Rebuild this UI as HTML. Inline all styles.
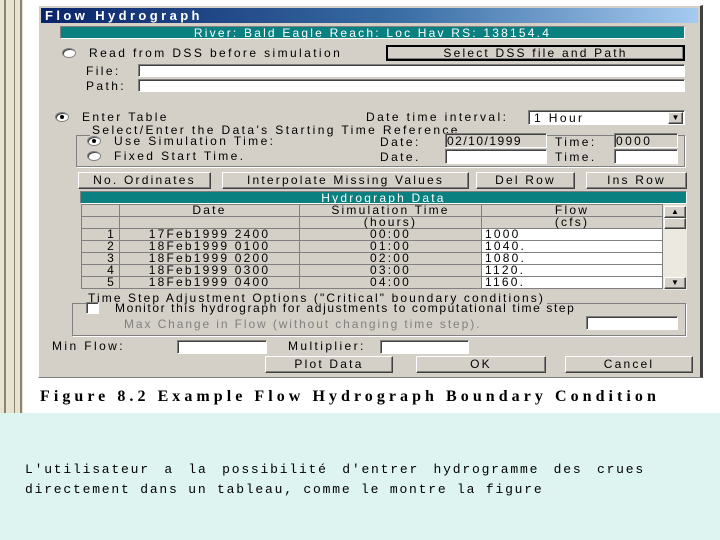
<!DOCTYPE html>
<html><head><meta charset="utf-8"><style>
*{margin:0;padding:0;box-sizing:border-box}
body{width:720px;height:540px;position:relative;overflow:hidden;background:#fff;font-family:"Liberation Sans",sans-serif}
.a{position:absolute}
.t{position:absolute;font-size:12px;letter-spacing:2.4px;color:#000;white-space:nowrap;line-height:12px}
.in{position:absolute;background:#fff;border-top:1px solid #808080;border-left:1px solid #808080;border-right:1px solid #fff;border-bottom:1px solid #fff;box-shadow:inset 1px 1px 0 #404040}
.btn{position:absolute;background:#d4d0c8;border-top:1px solid #fff;border-left:1px solid #fff;border-right:1px solid #404040;border-bottom:1px solid #404040;box-shadow:inset -1px -1px 0 #808080;font-size:12px;letter-spacing:2.2px;text-align:center;line-height:14px;white-space:nowrap}
.rad{position:absolute;width:14px;height:10px;border-radius:50%;background:#fff;border:1px solid #808080;box-shadow:inset 1px 1px 0 #404040}
.rad.on::after{content:"";position:absolute;left:4px;top:2px;width:4px;height:4px;border-radius:50%;background:#000}
.grp{position:absolute;border:1px solid #808080;box-shadow:1px 1px 0 #fff}
.teal{position:absolute;background:#0a8080;color:#fff;text-align:center;font-size:12px;letter-spacing:2.2px;line-height:12px;border:1px solid #fff;border-top-color:#808080;border-left-color:#808080}
table{border-collapse:collapse;position:absolute;font-size:12px;letter-spacing:2.2px}
td{border:1px solid #808080;height:12px;line-height:11px;padding:0 3px;white-space:nowrap}
</style></head><body>
<div class="a" style="left:0;top:0;width:23px;height:413px;background:#e8e3cf"></div>
<div class="a" style="left:4px;top:0;width:2px;height:413px;background:#8a8478"></div>
<div class="a" style="left:14px;top:0;width:1px;height:413px;background:#8a8478"></div>
<div class="a" style="left:20px;top:0;width:2px;height:413px;background:#8a8478"></div>
<div class="a" style="left:38px;top:5px;width:665px;height:373px;background:#d4d0c8;border:1px solid #fff;border-right:3px solid #404040;border-bottom:1px solid #808080"></div>
<div class="a" style="left:41px;top:8px;width:657px;height:15px;background:linear-gradient(90deg,#0a246a,#3a6ea5 55%,#a6caf0);color:#fff;font-weight:bold;font-size:13px;line-height:15px;padding-left:4px;letter-spacing:3.4px">Flow Hydrograph</div>
<div class="teal" style="left:60px;top:26px;width:625px;height:13px">River: Bald Eagle  Reach: Loc Hav  RS: 138154.4</div>
<div class="rad" style="left:62px;top:48px"></div>
<div class="t" style="left:89px;top:47px">Read from DSS before simulation</div>
<div class="btn" style="left:386px;top:45px;width:299px;height:16px;border:2px solid #000;line-height:12px">Select DSS file and Path</div>
<div class="t" style="left:86px;top:65px">File:</div>
<div class="in" style="left:138px;top:64px;width:547px;height:13px"></div>
<div class="t" style="left:86px;top:80px">Path:</div>
<div class="in" style="left:138px;top:79px;width:547px;height:13px"></div>
<div class="rad on" style="left:55px;top:112px"></div>
<div class="t" style="left:82px;top:111px">Enter Table</div>
<div class="t" style="left:366px;top:111px">Date time interval:</div>
<div class="in" style="left:528px;top:110px;width:157px;height:15px"><span class="t" style="left:5px;top:1px">1 Hour</span><div class="btn" style="right:1px;top:1px;width:15px;height:12px;line-height:9px;font-size:8px;letter-spacing:0">▼</div></div>
<div class="grp" style="left:76px;top:135px;width:609px;height:32px"></div>
<div class="t" style="left:90px;top:124px;background:#d4d0c8;padding:0 2px">Select/Enter the Data's Starting Time Reference</div>
<div class="rad on" style="left:87px;top:136px"></div>
<div class="t" style="left:114px;top:135px">Use Simulation Time:</div>
<div class="t" style="left:380px;top:136px">Date:</div>
<div class="in" style="left:445px;top:133px;width:102px;height:15px;background:#d4d0c8"><span class="t" style="left:1px;top:1px;letter-spacing:1.5px">02/10/1999</span></div>
<div class="t" style="left:555px;top:136px">Time:</div>
<div class="in" style="left:614px;top:133px;width:64px;height:15px;background:#d4d0c8"><span class="t" style="left:1px;top:1px">0000</span></div>
<div class="rad" style="left:87px;top:151px"></div>
<div class="t" style="left:114px;top:150px">Fixed Start Time.</div>
<div class="t" style="left:380px;top:151px">Date.</div>
<div class="in" style="left:445px;top:149px;width:102px;height:15px"></div>
<div class="t" style="left:555px;top:151px">Time.</div>
<div class="in" style="left:614px;top:149px;width:64px;height:15px"></div>
<div class="btn" style="left:78px;top:172px;width:133px;height:17px">No. Ordinates</div>
<div class="btn" style="left:222px;top:172px;width:247px;height:17px">Interpolate Missing Values</div>
<div class="btn" style="left:476px;top:172px;width:99px;height:17px">Del Row</div>
<div class="btn" style="left:586px;top:172px;width:101px;height:17px">Ins Row</div>
<div class="teal" style="left:80px;top:191px;width:607px;height:13px">Hydrograph Data</div>
<table style="left:81px;top:204px;width:582px;text-align:center">
<tr><td style="width:38px"></td><td style="width:180px">Date</td><td style="width:182px">Simulation Time</td><td>Flow</td></tr>
<tr><td></td><td></td><td>(hours)</td><td>(cfs)</td></tr>
<tr><td style="text-align:right">1</td><td>17Feb1999 2400</td><td>00:00</td><td style="background:#fff;text-align:left">1000</td></tr>
<tr><td style="text-align:right">2</td><td>18Feb1999 0100</td><td>01:00</td><td style="background:#fff;text-align:left">1040.</td></tr>
<tr><td style="text-align:right">3</td><td>18Feb1999 0200</td><td>02:00</td><td style="background:#fff;text-align:left">1080.</td></tr>
<tr><td style="text-align:right">4</td><td>18Feb1999 0300</td><td>03:00</td><td style="background:#fff;text-align:left">1120.</td></tr>
<tr><td style="text-align:right">5</td><td>18Feb1999 0400</td><td>04:00</td><td style="background:#fff;text-align:left">1160.</td></tr>
</table>
<div class="a" style="left:663px;top:205px;width:24px;height:85px;background:#ece9e0"></div>
<div class="btn" style="left:664px;top:206px;width:22px;height:12px;font-size:8px;line-height:9px;letter-spacing:0">▲</div>
<div class="btn" style="left:664px;top:218px;width:22px;height:11px"></div>
<div class="btn" style="left:664px;top:277px;width:22px;height:12px;font-size:8px;line-height:9px;letter-spacing:0">▼</div>
<div class="grp" style="left:72px;top:303px;width:614px;height:33px"></div>
<div class="t" style="left:86px;top:292px;background:#d4d0c8;padding:0 2px;letter-spacing:2.1px">Time Step Adjustment Options ("Critical" boundary conditions)</div>
<div class="in" style="left:86px;top:302px;width:13px;height:12px"></div>
<div class="t" style="left:115px;top:302px;letter-spacing:1.6px">Monitor this hydrograph for adjustments to computational time step</div>
<div class="t" style="left:124px;top:318px;color:#808080;letter-spacing:1.9px">Max Change in Flow (without changing time step).</div>
<div class="in" style="left:586px;top:316px;width:92px;height:14px"></div>
<div class="t" style="left:52px;top:340px">Min Flow:</div>
<div class="in" style="left:177px;top:340px;width:90px;height:14px"></div>
<div class="t" style="left:288px;top:340px">Multiplier:</div>
<div class="in" style="left:380px;top:340px;width:89px;height:14px"></div>
<div class="btn" style="left:265px;top:356px;width:128px;height:17px">Plot Data</div>
<div class="btn" style="left:416px;top:356px;width:130px;height:17px">OK</div>
<div class="btn" style="left:565px;top:356px;width:128px;height:17px">Cancel</div>
<div class="a" style="left:40px;top:388px;font-family:'Liberation Serif',serif;font-weight:bold;font-size:16px;letter-spacing:4.05px;white-space:nowrap">Figure 8.2 Example Flow Hydrograph Boundary Condition</div>
<div class="a" style="left:0;top:413px;width:720px;height:127px;background:#ddf4f1"></div>
<div class="a" style="left:25px;top:460px;width:620px;font-family:'Liberation Mono',monospace;font-size:13px;letter-spacing:1.8px;line-height:20px;text-align:justify;text-align-last:justify;white-space:normal">L'utilisateur a la possibilité d'entrer hydrogramme des crues</div>
<div class="a" style="left:25px;top:480px;font-family:'Liberation Mono',monospace;font-size:13px;letter-spacing:1.8px;line-height:20px;white-space:nowrap">directement dans un tableau, comme le montre la figure</div>
</body></html>
